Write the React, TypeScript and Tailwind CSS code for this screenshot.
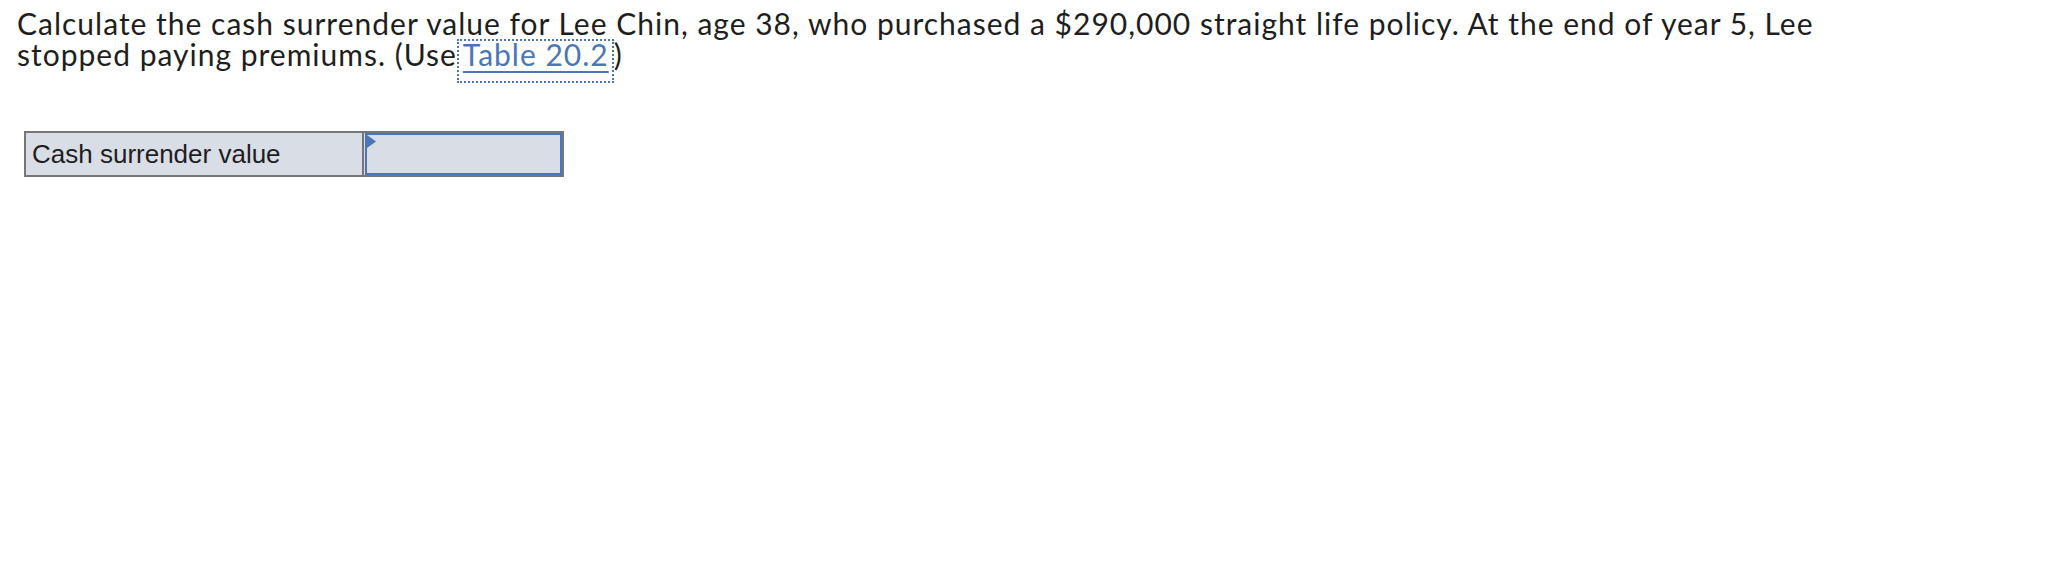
export default function App() {
  return (
    <div className="w-[2070px] h-[566px] bg-white pl-[17px] pt-[8px]">
      <p
        className="text-[30px] leading-[31px] tracking-[1px] text-[#1e1e1e]"
        style={{ fontFamily: "Lato, 'Noto Sans', sans-serif" }}
      >
        Calculate the cash surrender value for Lee Chin, age 38, who purchased a $290,000 straight life policy. At the end of year 5, Lee
        <br />
        stopped paying premiums. (Use
        <a
          href="#"
          className="inline-block border-2 border-dotted border-[#4a76b8] pl-[4px] pr-[3px] pb-[13px] leading-[27px] text-[#4a76b8] underline decoration-2 underline-offset-[5px]"
        >
          Table 20.2
        </a>
        )
      </p>
      <div className="mt-[48px] ml-[7px] flex w-[540px] h-[46px] border-2 border-[#767676] bg-[#d9dde6]">
        <div
          className="w-[338px] flex items-center pl-[6px] border-r-2 border-[#767676] text-[26px] leading-[29px] text-[#1e1e1e]"
          style={{ fontFamily: "'Liberation Sans', Arial, sans-serif" }}
        >
          Cash surrender value
        </div>
        <div className="relative flex-1 ml-[1px] border-2 border-[#4a76b8]">
          <svg className="absolute left-0 top-0" width="9" height="13" viewBox="0 0 9 13">
            <path d="M0 0 L9 6.5 L0 13 Z" fill="#4a76b8" />
          </svg>
          <input
            type="text"
            aria-label="Cash surrender value"
            className="w-full h-full bg-transparent outline-none"
          />
        </div>
      </div>
    </div>
  );
}
